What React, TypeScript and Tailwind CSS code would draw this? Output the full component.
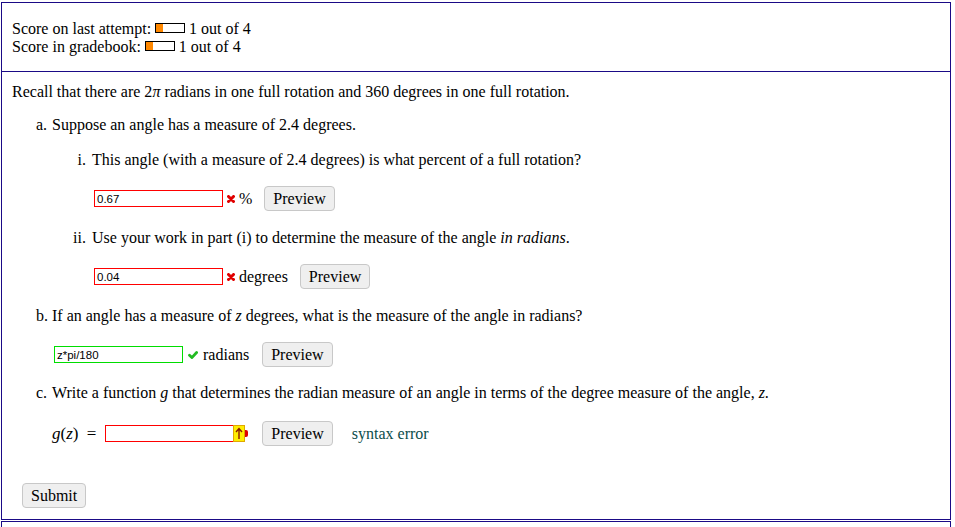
import React from "react";

const serif = { fontFamily: '"Liberation Serif", "Times New Roman", serif' };

function Bar() {
  return (
    <span className="inline-block align-middle w-[30px] h-[10px] border border-black bg-white relative mx-[4px] -mt-[2px]">
      <span className="absolute left-0 top-0 h-full w-[7px] bg-[#ff8800]" />
    </span>
  );
}

function Preview() {
  return (
    <button className="h-[25px] px-[8px] bg-[#efefef] border border-[#c8c8c8] rounded-[4px] text-[16px] leading-none text-black" style={serif}>
      Preview
    </button>
  );
}

function Cross() {
  return (
    <svg width="8" height="8" viewBox="0 0 8 8" className="shrink-0 block">
      <path d="M1.5 1.5 L6.5 6.5 M6.5 1.5 L1.5 6.5" stroke="#e00000" strokeWidth="3" strokeLinecap="round" />
    </svg>
  );
}

function Check() {
  return (
    <svg width="10" height="8" viewBox="0 0 10 8" className="shrink-0 block">
      <path d="M1.5 4.3 L3.9 6.6 L8.6 1.5" stroke="#22bb22" strokeWidth="2.8" fill="none" strokeLinecap="round" strokeLinejoin="round" />
    </svg>
  );
}

function Field({ value, color }: { value: string; color: string }) {
  return (
    <span
      className={`inline-flex items-center w-[129px] h-[17px] border bg-white px-[2px] text-[11.5px] text-black ${color}`}
      style={{ fontFamily: '"Liberation Sans", Arial, sans-serif' }}
    >
      {value}
    </span>
  );
}

export default function App() {
  return (
    <div className="bg-white w-[955px] h-[527px] overflow-hidden text-black text-[16px] leading-[18px]" style={serif}>
      <div className="ml-[1px] mt-[2px] w-[950px] border border-[#1a0a86]">
        <div className="pl-[10px] pt-[17px] pb-[15px]">
          <div className="flex items-center h-[18px]">
            Score on last attempt:<Bar />1 out of 4
          </div>
          <div className="flex items-center h-[18px]">
            Score in gradebook:<Bar />1 out of 4
          </div>
        </div>
        <div className="border-t border-[#1a0a86] pl-[10px] pt-[11px] pb-[11px]">
          <div className="h-[18px]">
            Recall that there are 2<i>π</i> radians in one full rotation and 360 degrees in one full rotation.
          </div>
          <div className="flex h-[18px] mt-[15px] pl-[24px]">
            <span className="w-[16px]">a.</span>
            <span>Suppose an angle has a measure of 2.4 degrees.</span>
          </div>
          <div className="flex h-[18px] mt-[17px] pl-[40px]">
            <span className="w-[40px] text-right pr-[6px]">i.</span>
            <span>This angle (with a measure of 2.4 degrees) is what percent of a full rotation?</span>
          </div>
          <div className="flex items-center h-[25px] mt-[17px] pl-[82px]">
            <Field value="0.67" color="border-[#ff0000]" />
            <span className="ml-[4px]"><Cross /></span>
            <span className="ml-[4px]">%</span>
            <span className="ml-[12px]"><Preview /></span>
          </div>
          <div className="flex h-[18px] mt-[18px] pl-[40px]">
            <span className="w-[40px] text-right pr-[6px]">ii.</span>
            <span>
              Use your work in part (i) to determine the measure of the angle <i>in radians</i>.
            </span>
          </div>
          <div className="flex items-center h-[25px] mt-[17px] pl-[82px]">
            <Field value="0.04" color="border-[#ff0000]" />
            <span className="ml-[4px]"><Cross /></span>
            <span className="ml-[4px]">degrees</span>
            <span className="ml-[12px]"><Preview /></span>
          </div>
          <div className="flex h-[18px] mt-[18px] pl-[24px]">
            <span className="w-[16px]">b.</span>
            <span>
              If an angle has a measure of <i>z</i> degrees, what is the measure of the angle in radians?
            </span>
          </div>
          <div className="flex items-center h-[25px] mt-[17px] pl-[42px]">
            <Field value="z*pi/180" color="border-[#00dd00]" />
            <span className="ml-[5px]"><Check /></span>
            <span className="ml-[5px]">radians</span>
            <span className="ml-[13px]"><Preview /></span>
          </div>
          <div className="flex h-[18px] mt-[17px] pl-[24px]">
            <span className="w-[16px]">c.</span>
            <span>
              Write a function <i>g</i> that determines the radian measure of an angle in terms of the degree measure of the angle, <i>z</i>.
            </span>
          </div>
          <div className="flex items-center h-[25px] mt-[19px] pl-[40px]">
            <span className="text-[17px]">
              <i>g</i>(<i>z</i>) <span className="ml-[4px]">=</span>
            </span>
            <span className="ml-[9px] flex items-center">
              <span className="inline-block w-[129px] h-[17px] border border-[#ff0000] bg-white" />
              <span className="inline-flex items-center justify-center w-[12px] h-[17px] bg-[#ffee00] border border-[#e0a800] -ml-[1px]">
                <svg width="8" height="13" viewBox="0 0 8 13">
                  <path d="M4 12 L4 2 M1 5 L4 1.5 L7 5" stroke="#8b1a00" strokeWidth="1.4" fill="none" />
                </svg>
              </span>
              <span className="inline-block w-[3px] h-[7px] bg-[#e00000] rounded-r-[2px]" />
            </span>
            <span className="ml-[14px]"><Preview /></span>
            <span className="ml-[19px] text-[#0b4c4a]">syntax error</span>
          </div>
          <div className="mt-[37px] pl-[10px]">
            <button className="h-[25px] px-[8px] bg-[#efefef] border border-[#c8c8c8] rounded-[4px] text-[16px] leading-none text-black" style={serif}>
              Submit
            </button>
          </div>
        </div>
      </div>
      <div className="ml-[1px] mt-[1px] w-[950px] h-[30px] border border-[#1a0a86]" />
    </div>
  );
}
